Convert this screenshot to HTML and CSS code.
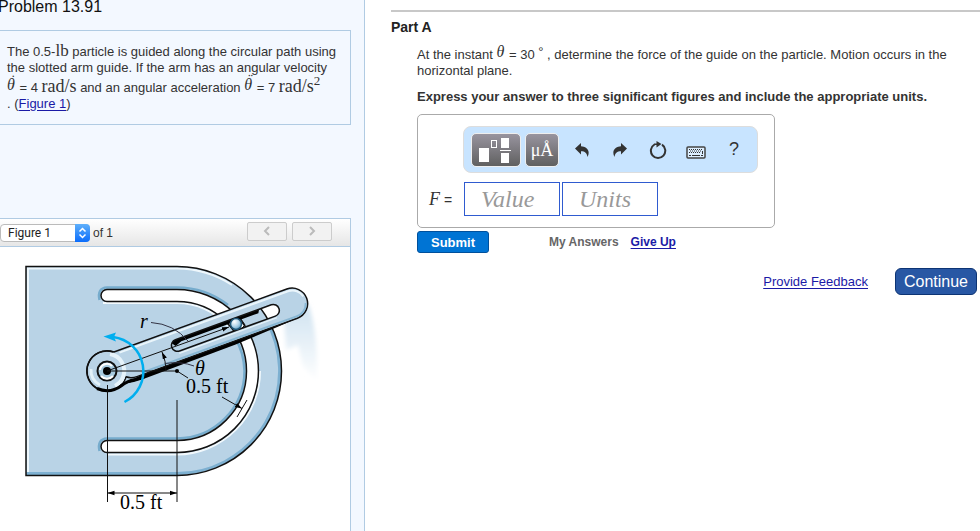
FILE: index.html
```html
<!DOCTYPE html>
<html lang="en">
<head>
<meta charset="utf-8">
<title>Problem 13.91</title>
<link rel="stylesheet" href="styles.css">
</head>
<body>
<div class="page">
  <aside class="side">
    <h1 class="title">Problem 13.91</h1>
    <section class="statement">
      <p>The 0.5-<span class="unit">lb</span> particle is guided along the circular path using<br>
      the slotted arm guide. If the arm has an angular velocity<br>
      <span class="theta dot1">θ</span> = 4 <span class="unit">rad/s</span> and an angular acceleration <span class="theta dot2">θ</span> = 7 <span class="unit">rad/s<sup>2</sup></span><br>
      . (<a href="#figure">Figure 1</a>)</p>
    </section>
    <section class="figure-panel" id="figure">
      <div class="figure-bar">
        <div class="picker">
          <select aria-label="Figure"><option>Figure 1</option></select>
          <svg class="picker-cap" viewBox="0 0 15 18" aria-hidden="true"><path d="M4.500 7.500 L7.500 4.500 L10.500 7.500 M4.500 10.500 L7.500 13.500 L10.500 10.500"/></svg>
        </div>
        <span class="count">of 1</span>
        <div class="pager">
          <button type="button" aria-label="Previous figure"><svg viewBox="0 0 10 10"><path d="M7 1 L3 5 L7 9"/></svg></button>
          <button type="button" aria-label="Next figure"><svg viewBox="0 0 10 10"><path d="M3 1 L7 5 L3 9"/></svg></button>
        </div>
      </div>
      <svg class="drawing" viewBox="0 247 350 284" role="img" aria-label="Slotted arm guiding a particle along a circular path">
        <defs>
          <linearGradient id="streak" x1="0" y1="0" x2="0" y2="1">
            <stop offset="0" stop-color="#cfe2f0"/><stop offset="1" stop-color="#fff"/>
          </linearGradient>
          <radialGradient id="ball" cx=".35" cy=".3" r=".8">
            <stop offset="0" stop-color="#fff"/><stop offset=".5" stop-color="#b5d6ea"/><stop offset="1" stop-color="#4f94bd"/>
          </radialGradient>
          <filter id="soft"><feGaussianBlur stdDeviation="2"/></filter>
          <mask id="hole" maskUnits="userSpaceOnUse" x="-30" y="-30" width="260" height="60">
            <rect x="-30" y="-30" width="260" height="60" fill="#fff"/>
            <rect x="69" y="-6" width="114" height="12" rx="6" fill="#000"/>
          </mask>
          <clipPath id="plateclip"><path d="M26 266.500 H177 A104.500 104.500 0 0 1 177 475.500 H26 Z"/></clipPath>
          <clipPath id="slotclip"><rect x="69" y="-6" width="114" height="12" rx="6"/></clipPath>
          <marker id="tip" markerUnits="userSpaceOnUse" markerWidth="8" markerHeight="6" refX="7" refY="3" orient="auto-start-reverse"><path d="M0 .8 L7 3 L0 5.200 Z"/></marker>
        </defs>

        <path d="M284 318 L308 304 Q318 330 317 382 L303 366 L298 345 L286 350 Z" fill="url(#streak)" filter="url(#soft)"/>

        <!-- plate -->
        <path d="M26 266.500 H177 A104.500 104.500 0 0 1 177 475.500 H26 Z" fill="#b9d3e6"/>
        <g clip-path="url(#plateclip)" fill="none">
          <path d="M28 476 V268.500 H177 A102 102 0 0 1 232 285" stroke="#eef7fc" stroke-width="2"/>
          <path d="M26 473.500 H177 A102.500 102.500 0 0 0 266 320" stroke="#7db0d1" stroke-width="3"/>
        </g>
        <path d="M26 266.500 H177 A104.500 104.500 0 0 1 177 475.500 H26 Z" fill="none" stroke="#111" stroke-width="1.500"/>

        <!-- circular slot -->
        <g fill="none">
          <path d="M103 303 H177 A68 68 0 0 1 228 326 M107 454.500 H177 A83.500 83.500 0 0 0 260 371" stroke="#f2f9fd" stroke-width="2"/>
          <path d="M99.500 300 Q97 288 107 287.500 H177 A83.500 83.500 0 0 1 228 305 M99.500 451 Q97 439 107 438.500 H177 A67.500 67.500 0 0 0 244.500 371 Q244 352 235 338" stroke="#76accd" stroke-width="2.500"/>
        </g>
        <path d="M107 289.500 H177 A81.500 81.500 0 0 1 177 452.500 H107 A6 6 0 0 1 107 440.500 H177 A69.500 69.500 0 0 0 177 301.500 H107 A6 6 0 0 1 107 289.500 Z" fill="#fff" stroke="#111" stroke-width="1.500"/>

        <!-- arm -->
        <g transform="translate(107 371) rotate(-20)">
          <g mask="url(#hole)">
            <path d="M12 18 Q20 20 30 20 L130 19 L175 17 L197 15.500 L60 12 Z" fill="#000"/>
            <path d="M13 -15.500 H197 A15.500 15.500 0 0 1 197 15.500 H27 Q20 15.500 16 12 A20 20 0 1 1 13 -15.500 Z" fill="#b9d3e6" stroke="#111" stroke-width="1.500"/>
            <path d="M18 -13 H198 A13 13 0 0 1 210 -3" fill="none" stroke="#eaf5fb" stroke-width="2"/>
            <path d="M32 13.500 H196 A13.500 13.500 0 0 0 210 4" fill="none" stroke="#88b7d4" stroke-width="2"/>
            <path d="M74 8 H178" fill="none" stroke="#e4f1f8" stroke-width="1.500"/>
          </g>
          <g clip-path="url(#slotclip)">
            <path d="M69 -6 H164 L162 -2.500 H80 L73 0 Z" fill="#000"/>
          </g>
          <rect x="69" y="-6" width="114" height="12" rx="6" fill="none" stroke="#111" stroke-width="1.500"/>
        </g>
        <circle cx="107" cy="371" r="19" fill="#b9d3e6"/>
        <path d="M110 354 A17 17 0 0 1 123 377 Q121 383 115 386" fill="none" stroke="#e6f3fa" stroke-width="4"/>
        <path d="M91 369 A16 16 0 0 0 100 385" fill="none" stroke="#e3f1f8" stroke-width="3"/>
        <path d="M113 352 A20 20 0 1 0 122 384" fill="none" stroke="#111" stroke-width="1.500"/>
        <path d="M97 388.500 Q110 394 121 386 Q127 381 135 379.500 L144 377" fill="none" stroke="#000" stroke-width="3"/>
        <circle cx="107" cy="371" r="9.500" fill="#a7cbe0" stroke="#111" stroke-width="2"/>
        <path d="M100 370 A7 7 0 0 1 112 366 M101 376 A8 8 0 0 0 113 376" fill="none" stroke="#fff" stroke-width="2"/>
        <circle cx="107" cy="371" r="4" fill="#000"/>

        <circle cx="236" cy="324" r="5.500" fill="url(#ball)" stroke="#1f5576" stroke-width="1.500"/>
        <path d="M241 319 L245 325 L241 329" fill="none" stroke="#111"/>

        <!-- dimensions -->
        <g fill="none" stroke="#111">
          <path d="M107 371 L229 327" marker-end="url(#tip)"/>
          <path d="M107 371 H177 L188 378"/>
          <path d="M151 322.500 Q174 324 188 341" stroke="#334"/>
          <path d="M166 371 Q166 361 162 352" marker-end="url(#tip)"/>
          <path d="M165 363.500 Q181 361 194 366" stroke="#334"/>
          <path d="M107.500 385 V502 M177 400 V502"/>
          <path d="M107.500 493 H177" marker-start="url(#tip)" marker-end="url(#tip)"/>
          <path d="M222 397 L242 408.500" marker-end="url(#tip)"/>
          <path d="M247 400 L237 417"/>
        </g>
        <circle cx="177" cy="371" r="2"/>
        <path d="M113 337 A34.500 34.500 0 0 1 124.500 402" fill="none" stroke="#00aeef" stroke-width="2.500"/>
        <path d="M103.500 336.500 L116 332.500 L114 337 L116 341.500 Z" fill="#00aeef"/>
        <g class="labels">
          <text class="var" x="140" y="328">r</text>
          <text class="var" x="195" y="375">θ</text>
          <text x="186" y="393">0.5 ft</text>
          <text x="120" y="509">0.5 ft</text>
        </g>
      </svg>
    </section>
  </aside>

  <main class="work">
    <h2>Part A</h2>
    <div class="part">
      <p>At the instant <span class="theta">θ</span> = 30 <sup class="degree">°</sup> , determine the force of the guide on the particle. Motion occurs in the horizontal plane.</p>
      <p class="ask">Express your answer to three significant figures and include the appropriate units.</p>
      <form class="answer">
        <div class="tools">
          <button class="tile wide" type="button" aria-label="Templates">
            <svg width="34" height="28" viewBox="0 0 34 28"><g fill="#fff"><rect x="0" y="12" width="10" height="14"/><rect x="22" y="2" width="8" height="10"/><rect x="21" y="14" width="11" height="1"/><rect x="22" y="17" width="8" height="10"/></g><rect x="12.500" y="4.500" width="5" height="7" fill="none" stroke="#fff"/></svg>
          </button>
          <button class="tile" type="button" aria-label="Units symbols">μÅ</button>
          <button class="tool" type="button" aria-label="Undo"><svg width="16" height="16" viewBox="0 0 16 16"><path d="M1 6.500 L7 1 V4.200 C12 4.500 17 8 13.500 15 C13 11 11 9.200 7 9.200 V12.500 Z"/></svg></button>
          <button class="tool" type="button" aria-label="Redo"><svg width="16" height="16" viewBox="0 0 16 16"><path d="M15 6.500 L9 1 V4.200 C4 4.500 -1 8 2.500 15 C3 11 5 9.200 9 9.200 V12.500 Z"/></svg></button>
          <button class="tool" type="button" aria-label="Reset"><svg width="18" height="18" viewBox="0 0 18 18"><path d="M5.500 3.500 A7.200 7.200 0 1 0 13 3.700" fill="none" stroke="#333" stroke-width="2"/><path d="M7.500 0 L12.500 3 L7.500 6.500 V4 H5 V2.500 H7.500 Z"/></svg></button>
          <button class="tool" type="button" aria-label="Keyboard"><svg class="keys" width="20" height="13" viewBox="0 0 20 13"><rect x="1" y="1" width="18" height="11" rx="1" fill="#dceeff" stroke="#444" stroke-width="1.500"/><path d="M3 3.500 H17 M3 6.500 H14" stroke="#333" stroke-dasharray="1 1"/><path d="M4 5 H15" stroke="#333" stroke-dasharray="1 1"/><path d="M3 9.500 H5 M6 9.500 H14 M15 9.500 H17 M16.500 5 V8" stroke="#333"/></svg></button>
          <button class="tool help" type="button" aria-label="Help">?</button>
        </div>
        <div class="entry">
          <label for="value"><i>F</i> =</label>
          <input id="value" type="text" placeholder="Value">
          <input type="text" placeholder="Units" aria-label="Units">
        </div>
      </form>
      <div class="actions">
        <button class="submit" type="button">Submit</button>
        <span class="mine">My Answers</span>
        <a href="#give-up">Give Up</a>
      </div>
    </div>
    <footer class="foot">
      <a href="#feedback">Provide Feedback</a>
      <button class="continue" type="button">Continue</button>
    </footer>
  </main>
</div>
</body>
</html>
```
FILE: styles.css
```css
* { box-sizing: border-box; }

body {
  margin: 0;
  background: #fff;
  color: #333;
  font: 13px/16px "Liberation Sans", Arial, sans-serif;
}

h1, h2, p { margin: 0; }
a { color: #1a1aa6; text-underline-offset: 2px; }
button { font-family: inherit; padding: 0; }

.page {
  display: grid;
  grid-template-columns: minmax(365px, 37%) 1fr;
  min-height: 100vh;
}

/* left column */
.side {
  display: flex;
  flex-direction: column;
  overflow: hidden;
  padding-right: 13px;
  border-right: 1px solid #b0cbe3;
  background: #f3f8ff;
}

.title {
  margin-left: -2px;
  padding-bottom: 16px;
  color: #111;
  font-size: 16px;
  font-weight: normal;
  line-height: 14px;
}

.statement {
  padding: 13px 7px 12px;
  border: 1px solid #b0cbe3;
  border-left: 0;
  white-space: nowrap;
}

.unit {
  font-family: "Liberation Serif", serif;
  font-size: 17px;
  line-height: 12px;
}

.statement .theta ~ .unit { font-size: 18px; }

.unit sup {
  font-size: 13px;
  line-height: 0;
}

.theta {
  position: relative;
  display: inline-block;
  margin-right: 1px;
  font: italic 16px/12px "Liberation Serif", serif;
  vertical-align: 2px;
}

.statement .theta { line-height: 18px; }

.dot1::before, .dot2::before {
  position: absolute;
  top: -4px;
  left: 3px;
  font-size: 14px;
  content: "˙";
}

.dot2::before { content: "¨"; }

.figure-panel {
  flex: 1;
  margin-top: 93px;
  border: 1px solid #b0cbe3;
  border-width: 1px 1px 0 0;
  background: #fff;
}

.figure-bar {
  display: flex;
  align-items: center;
  height: 28px;
  padding-right: 18px;
  border-bottom: 1px solid #b0cbe3;
  background: linear-gradient(#fff, #e6e6e6);
}

.picker {
  position: relative;
  display: flex;
  width: 90px;
}

.picker select {
  width: 100%;
  height: 18px;
  padding: 0 20px 0 7px;
  border: 1px solid #bbb;
  border-radius: 4px;
  background: #fff;
  color: #222;
  font: 12px/16px Roboto, sans-serif;
  appearance: none;
}

.picker-cap {
  position: absolute;
  top: 0;
  right: 0;
  width: 15px;
  height: 18px;
  border-radius: 0 4px 4px 0;
  background: linear-gradient(#5fb0fb, #0a6cfb);
  fill: none;
  stroke: #fff;
  stroke-width: 1.5;
  pointer-events: none;
}

.count { margin-left: 3px; font-size: 12px; }

.pager {
  display: flex;
  gap: 5px;
  margin-left: auto;
  padding-bottom: 3px;
}

.pager button {
  display: grid;
  place-items: center;
  width: 40px;
  height: 19px;
  border: 1px solid #ccc;
  border-radius: 2px;
  background: #f2f2f2;
}

.pager svg {
  width: 10px;
  height: 10px;
  fill: none;
  stroke: #bbb;
  stroke-width: 2;
}

.drawing { display: block; width: 100%; }
.labels { font: 20px "Liberation Serif", serif; }
.var { font-style: italic; }

/* right column */
.work {
  margin: 10px 0 0 26px;
  border-top: 2px solid #c8c8c8;
}

.work h2 {
  padding: 7px 0 11px;
  color: #222;
  font-size: 14px;
  line-height: 16px;
}

.part { padding-left: 26px; }
.part > p { padding-right: 12px; }
.degree { font-size: 13px; line-height: 0; vertical-align: 3px; }
.part .ask { padding-top: 10px; font-weight: bold; }

.answer {
  width: 358px;
  max-width: 100%;
  margin-top: 9px;
  padding: 11px 16px 11px 11px;
  border: 1px solid #aaa;
  border-radius: 5px;
}

.tools {
  display: flex;
  align-items: center;
  height: 47px;
  margin-left: 34px;
  padding-left: 7px;
  border: 1px solid #ddd;
  border-radius: 8px;
  background: #c8e4ff;
}

.tile {
  display: grid;
  place-items: center;
  width: 34px;
  height: 34px;
  margin-right: 4px;
  border: 1px solid #eee;
  border-radius: 5px;
  background: linear-gradient(#98949f, #606060);
  color: #fff;
  font: 18px/30px "Liberation Serif", serif;
}

.tile.wide { width: 50px; }

.tool {
  display: grid;
  place-items: center;
  width: 38px;
  height: 34px;
  border: 0;
  background: none;
  color: #333;
  fill: #333;
}

.keys { margin-top: 5px; }
.help { font-size: 18px; }

.entry {
  display: flex;
  align-items: center;
  gap: 2px;
  margin-top: 9px;
}

.entry label { width: 33px; font-size: 14px; white-space: nowrap; }
.entry label i { font: italic 18px "Liberation Serif", serif; }

.entry input {
  width: 96px;
  height: 34px;
  padding: 0 16px;
  border: 1px solid #2f5bd0;
  background: #fff;
  font: italic 24px "Liberation Serif", serif;
}

.entry input::placeholder { color: #999; }

.actions {
  display: flex;
  align-items: center;
  margin-top: 3px;
  font-size: 12px;
  font-weight: bold;
}

.submit {
  width: 72px;
  height: 22px;
  margin-right: 60px;
  border: 1px solid #00509c;
  border-radius: 3px;
  background: #0074d4;
  color: #fff;
  font-size: 13px;
  font-weight: bold;
}

.mine { margin-right: 12px; color: #666; }

.foot {
  display: flex;
  align-items: center;
  justify-content: flex-end;
  gap: 27px;
  margin-top: 15px;
  padding-right: 3px;
}

.continue {
  width: 82px;
  height: 27px;
  border: 1px solid #0d3474;
  border-radius: 6px;
  background: #2857a4;
  color: #fff;
  font-size: 16px;
}
```
